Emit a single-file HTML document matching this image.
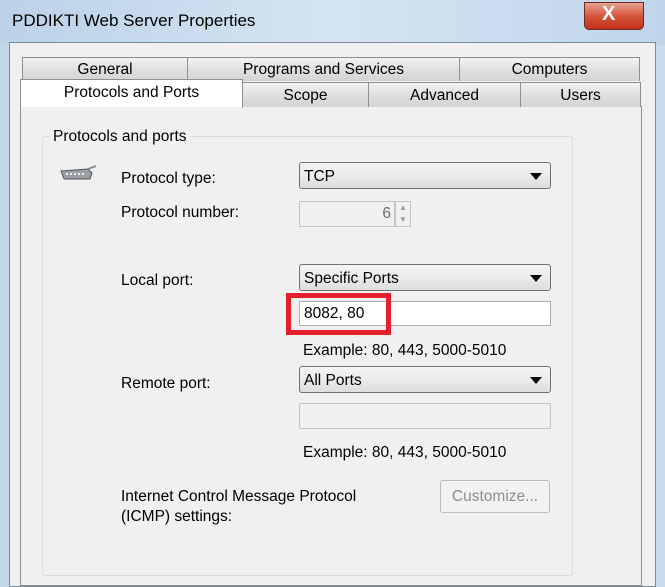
<!DOCTYPE html><html><head><style>
*{margin:0;padding:0;box-sizing:border-box}
body{width:665px;height:580px;overflow:hidden;position:relative;font-family:"Liberation Sans",sans-serif;font-size:15.5px;color:#000;background:linear-gradient(90deg,#c4d6ea,#d8e6f3 40%,#c9dbee)}
.a{position:absolute}
.tab{position:absolute;border:1px solid #8e8f8f;border-bottom:none;background:linear-gradient(#f2f2f2,#e0e0e0 50%,#d4d4d4);text-align:center;line-height:24px}
.combo{position:absolute;border:1px solid #707070;border-radius:3px;background:linear-gradient(#f4f4f4,#ebebeb 50%,#dddddd);height:27px;line-height:27px;padding-left:4px}
.combo:after{content:"";position:absolute;right:8px;top:10px;border-left:6px solid transparent;border-right:6px solid transparent;border-top:7px solid #000}
.edit{position:absolute;border:1px solid #abadb3;background:#fff;height:25px}
</style></head><body>
<div class="a" style="left:0;top:0;width:665px;height:45px;background:linear-gradient(90deg,#bcd2e8,#d5e4f2 50%,#c0d5ea)"></div>
<div class="a" style="left:12px;top:11px;font-size:17px">PDDIKTI Web Server Properties</div>
<div class="a" style="left:584px;top:2px;width:60px;height:28px;border:1px solid #6b2a20;border-radius:0 0 5px 5px;background:linear-gradient(#e8a292,#d4563c 50%,#c2311a)"></div>
<div class="a" style="left:602px;top:3px;color:#fff;font-weight:bold;font-size:20px">X</div>
<div class="a" style="left:9px;top:42px;width:647px;height:545px;background:#f0f0f0;border:1px solid #7a8aa0"></div>
<div class="tab" style="left:22px;top:57px;width:166px;height:24px">General</div>
<div class="tab" style="left:187px;top:57px;width:273px;height:24px">Programs and Services</div>
<div class="tab" style="left:459px;top:57px;width:181px;height:24px">Computers</div>
<div class="a" style="left:20px;top:106px;width:622px;height:480px;border:1px solid #8e8f8f;background:#f0f0f0"></div>
<div class="tab" style="left:242px;top:82px;width:127px;height:25px;line-height:25px">Scope</div>
<div class="tab" style="left:368px;top:82px;width:153px;height:25px;line-height:25px">Advanced</div>
<div class="tab" style="left:520px;top:82px;width:121px;height:25px;line-height:25px">Users</div>
<div class="tab" style="left:20px;top:79px;width:223px;height:29px;background:#fff;line-height:26px;border-bottom:none">Protocols and Ports</div>
<div class="a" style="left:21px;top:107px;width:221px;height:3px;background:#f0f0f0"></div>
<div class="a" style="left:42px;top:136px;width:531px;height:440px;border:1px solid #d5dfe5;border-radius:3px"></div>
<div class="a" style="left:50px;top:128px;background:#f0f0f0;padding:0 3px">Protocols and ports</div>
<svg class="a" style="left:58px;top:163px" width="40" height="20"><path d="M3 8 L30 6 L34 10 L32 16 L6 16 Z" fill="#9aa0a6" stroke="#555"/><path d="M8 11h20" stroke="#eee" stroke-width="2" stroke-dasharray="2 2"/><path d="M30 6 L38 3" stroke="#888" stroke-width="2"/></svg>
<div class="a" style="left:121px;top:170px">Protocol type:</div>
<div class="combo" style="left:299px;top:162px;width:252px">TCP</div>
<div class="a" style="left:121px;top:204px">Protocol number:</div>
<div class="a" style="left:299px;top:201px;width:96px;height:26px;border:1px solid #c5c5c5;background:#f0f0f0;text-align:right;padding-right:3px;line-height:24px;color:#6d6d6d">6</div>
<div class="a" style="left:395px;top:201px;width:16px;height:26px;border:1px solid #c5c5c5;font-size:8px;color:#999;text-align:center;line-height:12px">▲<br>▼</div>
<div class="a" style="left:121px;top:272px">Local port:</div>
<div class="combo" style="left:299px;top:264px;width:252px">Specific Ports</div>
<div class="edit" style="left:299px;top:301px;width:252px;padding-left:4px;line-height:24px">8082, 80</div>
<div class="a" style="left:286px;top:293px;width:105px;height:42px;border:5px solid #e3202b"></div>
<div class="a" style="left:303px;top:342px">Example: 80, 443, 5000-5010</div>
<div class="a" style="left:121px;top:375px">Remote port:</div>
<div class="combo" style="left:299px;top:366px;width:252px">All Ports</div>
<div class="a" style="left:299px;top:403px;width:252px;height:26px;border:1px solid #c5c5c5;border-radius:2px"></div>
<div class="a" style="left:303px;top:444px">Example: 80, 443, 5000-5010</div>
<div class="a" style="left:121px;top:487px;line-height:20px">Internet Control Message Protocol<br>(ICMP) settings:</div>
<div class="a" style="left:440px;top:480px;width:110px;height:33px;border:1px solid #bcbcbc;border-radius:3px;text-align:center;line-height:31px;color:#8d8d8d;background:#f2f2f2">Customize...</div>
</body></html>
